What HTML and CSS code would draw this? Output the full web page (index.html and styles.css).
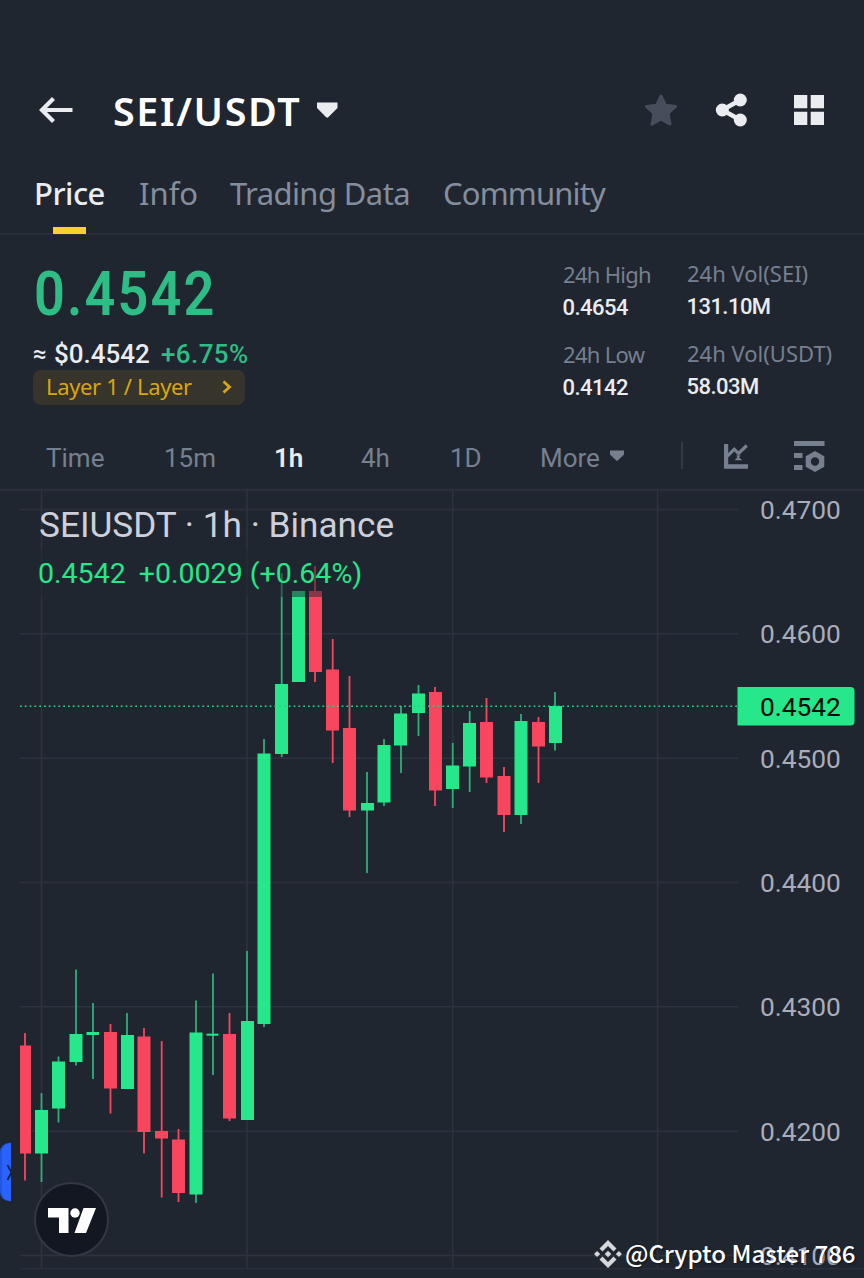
FILE: index.html
```html
<!DOCTYPE html>
<html lang="en">
<head>
<meta charset="utf-8">
<title>SEI/USDT</title>
<link rel="stylesheet" href="styles.css">
</head>
<body>
<main class="app">
  <header class="header">
    <svg class="back" width="36" height="30" viewBox="0 0 36 30"><path d="M34.500 15H4M15.500 3.500L4 15l11.500 11.500" fill="none" stroke="#eaecef" stroke-width="4.200"/></svg>
    <h1 class="pair">SEI/USDT</h1>
    <svg class="caret" width="22" height="18" viewBox="0 0 22 18"><path d="M1 1.500h20.500v5.500L12.500 16q-1.300 1.300-2.600 0L1 7z" fill="#eaecef"/></svg>
    <div class="actions">
      <svg width="36" height="36" viewBox="0 0 36 36"><path d="M18 4l4.300 9.200 10.200 1.200-7.500 7 2 10.700L18 27l-9 5.100 2-10.700-7.500-7 10.200-1.200z" fill="#474d5b" stroke="#474d5b" stroke-width="3" stroke-linejoin="round"/></svg>
      <svg width="34" height="36" viewBox="0 0 34 36"><path d="M25.300 8L7.300 18l18 10" fill="none" stroke="#eaecef" stroke-width="4.500"/><circle cx="7.300" cy="18" r="6.500" fill="#eaecef"/><circle cx="25.300" cy="8" r="6.500" fill="#eaecef"/><circle cx="25.300" cy="28" r="6.500" fill="#eaecef"/></svg>
      <svg width="30" height="30" viewBox="0 0 30 30"><path d="M0 0h13.300v13.300H0zM16.700 0H30v13.300H16.700zM0 16.700h13.300V30H0zM16.700 16.700H30V30H16.700z" fill="#eaecef"/></svg>
    </div>
  </header>

  <nav class="tabs">
    <span class="tab active t-price">Price</span>
    <span class="tab t-info">Info</span>
    <span class="tab t-data">Trading Data</span>
    <span class="tab t-comm">Community</span>
  </nav>

  <section class="ticker">
    <div class="quote">
      <div class="last">0.4542</div>
      <div class="sub"><span class="approx">≈</span><span class="fiat">$0.4542</span><span class="change">+6.75%</span></div>
      <div class="tag"><span>Layer 1 / Layer</span><svg width="10" height="14" viewBox="0 0 10 14"><path d="M1.500 1.500L7.500 7l-6 5.500" fill="none" stroke="#d9a70d" stroke-width="2.800"/></svg></div>
    </div>
    <dl class="stats first">
      <dt>24h High</dt><dd>0.4654</dd>
      <dt>24h Low</dt><dd>0.4142</dd>
    </dl>
    <dl class="stats second">
      <dt>24h Vol(SEI)</dt><dd>131.10M</dd>
      <dt>24h Vol(USDT)</dt><dd>58.03M</dd>
    </dl>
  </section>

  <nav class="intervals">
    <span class="i-time">Time</span>
    <span class="i-15">15m</span>
    <span class="i-1h on">1h</span>
    <span class="i-4h">4h</span>
    <span class="i-1d">1D</span>
    <span class="i-more">More</span>
    <svg class="i-caret" width="14" height="11" viewBox="0 0 14 11"><path d="M0 .500h14v4L8 10.300q-1 1-2 0L0 4.500z" fill="#76808f"/></svg>
    <i class="sep"></i>
    <svg class="i-chart" width="24" height="26" viewBox="0 0 24 26"><path d="M2 1v22.500h22" fill="none" stroke="#76808f" stroke-width="4.400"/><path d="M3.500 13L10.300 6.200l4.200 4.300 8.300-8" fill="none" stroke="#76808f" stroke-width="3.200"/><path d="M12 12.500h4.800L15 14.300l3.300 3h-7.600l2.700-3z" fill="#76808f"/></svg>
    <svg class="i-set" width="31" height="32" viewBox="0 0 31 32"><path d="M0 0h30.500v5H0zM0 12h8.500v5H0zM0 24h8.500v5H0z" fill="#76808f"/><path fill-rule="evenodd" d="M21 10l9.300 5.300v10.400L21 31l-9.300-5.300V15.300zM21 16.300a4.200 4.200 0 1 0 0 8.400a4.200 4.200 0 1 0 0-8.400z" fill="#76808f"/></svg>
  </nav>

  <section class="chart">
    <svg class="plot" id="plot" width="864" height="790" viewBox="0 488 864 790"></svg>
    <div class="legend">
      <div class="symbol">SEIUSDT · 1h · Binance</div>
      <div class="values"><span>0.4542</span><span>+0.0029 (+0.64%)</span></div>
    </div>
    <div class="drawer"><svg width="11" height="58" viewBox="0 0 11 58"><path d="M7.500 22l4 7.500-4 7.500" fill="none" stroke="#14213f" stroke-width="1.800"/></svg></div>
    <div class="tv"><svg width="48" height="26" viewBox="0 0 48 26"><path d="M0 0h20.500v25H11V9.500H0zM35.500 0H48L38 25H26.500z" fill="#fff"/><circle cx="27" cy="5" r="4.700" fill="#fff"/></svg></div>
    <div class="credit">
      <svg width="28" height="28" viewBox="0 0 28 28"><path d="M14 0l8.500 8.500-3 3L14 6l-5.500 5.500-3-3zM14 28l8.500-8.500-3-3L14 22l-5.500-5.500-3 3zM3.100 10.900L6.200 14l-3.100 3.100L0 14zM24.900 10.900L28 14l-3.100 3.100-3.100-3.100zM14 10.700l3.300 3.300-3.300 3.300-3.300-3.300z" fill="#d6d7d9"/></svg>
      <span>@Crypto Master 786</span>
    </div>
  </section>
</main>
<script src="chart.js"></script>
</body>
</html>
```

FILE: styles.css
```css
* { box-sizing: border-box; }
body { margin: 0; background: #202630; color: #eaecef; font-family: "Noto Sans", sans-serif; }
svg { display: block; flex: none; }
.app { width: 864px; height: 1278px; overflow: hidden; display: flex; flex-direction: column; white-space: nowrap; }

.header { height: 160px; padding: 60px 40px 0 38px; display: flex; align-items: center; }
.pair { margin: 1px 0 0 39px; width: 203px; font-size: 39.500px; line-height: 50px; font-weight: 600; color: #fff; letter-spacing: 1.600px; }
.actions { margin-left: auto; display: flex; align-items: center; gap: 51px; }
.actions svg:nth-child(2) { margin-left: -15px; margin-right: -6px; }

.tabs { height: 75px; padding: 9px 0 0 34px; display: flex; border-bottom: 2px solid #29303a; color: #848e9c; font-size: 31px; line-height: 48px; }
.tab { position: relative; height: 65px; }
.t-price { width: 105px; font-weight: 500; color: #eaecef; letter-spacing: -.500px; }
.t-info { width: 91px; }
.t-data { width: 213px; letter-spacing: -.600px; }
.t-comm { letter-spacing: -.850px; }
.active::after { content: ""; position: absolute; left: 19px; bottom: 0; width: 33px; height: 7px; background: #f8d12f; }

.ticker { height: 188px; padding-left: 33px; display: flex; }
.quote { width: 530px; }
.last { margin-top: 22px; height: 77px; padding-left: 1px; font: 600 61.500px/75px Roboto, sans-serif; color: #2ebd85; letter-spacing: 2.400px; transform: scaleX(.88); transform-origin: 0 0; }
.sub { height: 36px; padding-top: 3px; display: flex; align-items: center; font: 500 26px/36px Roboto, sans-serif; }
.approx { width: 21px; font-size: 24px; }
.fiat { width: 107px; }
.change { color: #2ebd85; letter-spacing: .400px; }
.tag { width: 212px; height: 35px; border-radius: 8px; background: #37342c; color: #d9a70d; padding: 0 13px; display: flex; align-items: center; justify-content: space-between; font-size: 22px; line-height: 33px; letter-spacing: -.350px; }
.tag span { height: 35px; }
.tag svg { margin-bottom: 2px; }
.stats { margin: 22px 0 0; width: 124px; }
.second { margin-top: 21px; }
.stats dt { height: 36px; font-size: 22px; line-height: 34px; color: #76808f; }
.first dt { letter-spacing: -.700px; }
.stats dd { margin: 0 0 0 -.5px; height: 44px; font: 500 22px/29px Roboto, sans-serif; color: #eaecef; letter-spacing: -.550px; }

.intervals { height: 65px; padding-left: 46px; display: flex; align-items: center; font: 400 26px/40px Roboto, sans-serif; color: #76808f; }
.intervals span { padding-top: 5px; }
.i-time { width: 118px; }
.i-15 { width: 110px; }
.i-1h { width: 87px; }
.on { font-weight: 600; color: #eaecef; }
.i-4h { width: 89px; }
.i-1d { width: 90px; }
.i-more { width: 70px; }
.sep { width: 2px; height: 27px; margin-left: 57px; background: #343a45; }
.i-chart { margin-left: 41px; }
.i-set { margin: 2px 0 0 46px; }

.chart { position: relative; height: 790px; }
.legend { position: absolute; left: 39px; top: 15px; font-family: Roboto, sans-serif; }
.symbol { height: 46px; font-size: 35.200px; line-height: 45px; color: #cdd0da; }
.values { margin-left: -1px; height: 50px; display: flex; gap: 13px; font-size: 28.550px; line-height: 50px; color: #26e78a; }
.drawer { position: absolute; left: 0; top: 655px; width: 11px; height: 58px; border-radius: 9px 0 0 9px; background: #2962ff; border-left: 2px solid #2455db; }
.drawer svg { margin-left: -2px; }
.tv { position: absolute; left: 34px; top: 694px; width: 75px; height: 75px; border: 2px solid #333743; border-radius: 50%; background: #131722; display: flex; align-items: center; justify-content: center; padding: 2px 0 0 1px; }
.credit { position: absolute; left: 594px; top: 745px; display: flex; align-items: center; gap: 3px; font: 500 24.100px/40px "Noto Sans CJK SC", sans-serif; color: #fff; text-shadow: 1px 1px 2px #0008; }
.credit span { height: 42px; }
.axis { font: 26.300px Roboto, sans-serif; fill: #a9adb9; }
.price { fill: #050a08; }
```

FILE: chart.js
```js
const UP = "#26e78a", DOWN = "#f7465d";
const UP_WICK = "#2eaf78", DOWN_WICK = "#f7465d";
const GRID = "#2d333e";

// [body left, body right, body top, body bottom, wick x, wick top, wick bottom, rising]
const candles = [
  [20, 31, 1045.5, 1153.5, 25, 1033, 1180.5, 0],
  [35, 48, 1110, 1153.5, 41.5, 1093, 1182, 1],
  [52, 65, 1061.5, 1108.5, 58.5, 1056.5, 1122.5, 1],
  [69.5, 82.5, 1034, 1062, 76, 969.5, 1065.5, 1],
  [86.5, 99, 1032, 1035, 93, 1003, 1079, 1],
  [104, 117, 1032, 1088.5, 110.5, 1024, 1113.5, 0],
  [121, 134, 1035, 1089, 127, 1013, 1089, 1],
  [137.5, 150.5, 1036.5, 1132, 144, 1028, 1153.5, 0],
  [155, 168, 1131, 1138.5, 161.7, 1041, 1197.5, 0],
  [172, 185, 1139.5, 1193, 178.5, 1129, 1202, 0],
  [189.5, 202.5, 1032.5, 1194.5, 196, 1000.5, 1203, 1],
  [206.5, 218.5, 1033.7, 1035.7, 213, 973.5, 1075, 1],
  [223, 236, 1034, 1118.5, 229.5, 1013, 1121, 0],
  [241, 254, 1021, 1120, 247, 951, 1120, 1],
  [257.5, 270.5, 753.5, 1024, 264, 739, 1027, 1],
  [275, 288, 684, 754, 281.7, 573, 757, 1],
  [292, 305, 591, 682, 298.5, 591, 682, 1],
  [309, 322, 591, 672, 315, 566, 682, 0],
  [326, 339, 669.5, 730.5, 332.7, 639, 763, 0],
  [343, 356, 728, 810.5, 349.5, 676, 817, 0],
  [361, 374, 803, 810.5, 367, 772, 873, 1],
  [377.5, 390.5, 745, 802.5, 384, 739, 806, 1],
  [394, 407, 713.5, 745.5, 401, 706, 773, 1],
  [412, 425, 693.5, 713, 418.5, 685, 736, 1],
  [429, 442, 692, 790.5, 435, 687, 806, 0],
  [446, 459, 765.5, 789, 452.7, 743, 808, 1],
  [463, 476, 723, 766.5, 469.7, 711, 792, 1],
  [480, 493, 722, 777.5, 486.5, 698, 783, 0],
  [497.5, 510.5, 776, 815, 504, 767, 832, 0],
  [514.5, 527.5, 721, 815, 521, 714, 824, 1],
  [532, 545, 722, 746.5, 538.5, 717, 783, 0],
  [549, 562, 706, 743, 555, 692, 750.5, 1]
];

const levels = [["0.4700", 509.5], ["0.4600", 633.8], ["0.4500", 758.2], ["0.4400", 882.5], ["0.4300", 1006.8], ["0.4200", 1131.2], ["0.4100", 1255.5]];
const parts = [];
const line = (x1, y1, x2, y2, color, width, extra = "") =>
  parts.push(`<line x1="${x1}" y1="${y1}" x2="${x2}" y2="${y2}" stroke="${color}" stroke-width="${width}" ${extra}/>`);

line(0, 490, 864, 490, "#292f3a", 2.5);
for (const [, y] of levels) line(20, y, 738, y, GRID, 1.5);
line(20, 1268.7, 864, 1268.7, "#292f3a", 1.5);
for (const x of [41.5, 247, 452.8, 657.6]) line(x, 489, x, 1268, GRID, 1.5);

for (const [l, r, top, bottom, wx, wTop, wBottom, up] of candles) {
  line(wx, wTop, wx, wBottom, up ? UP_WICK : DOWN_WICK, 1.8);
  parts.push(`<rect x="${l}" y="${top}" width="${r - l}" height="${bottom - top}" fill="${up ? UP : DOWN}"/>`);
}

// Legend backdrop fades the candles that pass behind it
parts.push(`<rect x="34" y="550" width="334" height="47" fill="#202630" fill-opacity=".5"/>`);
line(20, 706.2, 738, 706.2, "#2bcf85", 1.6, 'stroke-dasharray="1.8 3"');
parts.push(`<path d="M737.500 687H850.500q4 0 4 4V721.500q0 4-4 4H737.500z" fill="${UP}"/>`);
for (const [label, y] of levels) parts.push(`<text class="axis" x="760" y="${y + 9.5}">${label}</text>`);
parts.push(`<text class="axis price" x="760" y="715.500">0.4542</text>`);
document.getElementById("plot").innerHTML = parts.join("");
```
